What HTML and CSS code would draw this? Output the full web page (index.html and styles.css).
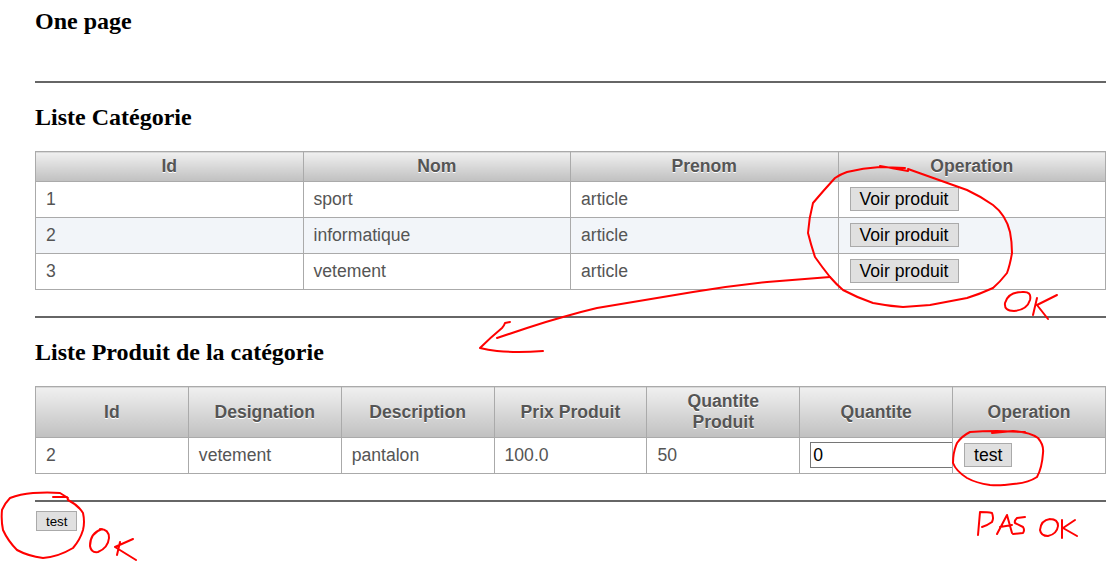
FILE: index.html
```html
<!DOCTYPE html>
<html lang="fr">
<head>
<meta charset="utf-8">
<title>One page</title>
<link rel="stylesheet" href="styles.css">
</head>
<body>
<main class="page">
  <h3 class="title">One page</h3>
  <hr class="rule rule-first">
  <h3 class="heading">Liste Catégorie</h3>
  <table class="grid">
    <thead><tr><th>Id</th><th>Nom</th><th>Prenom</th><th>Operation</th></tr></thead>
    <tbody>
      <tr><td>1</td><td>sport</td><td>article</td><td><button class="btn">Voir produit</button></td></tr>
      <tr class="alt"><td>2</td><td>informatique</td><td>article</td><td><button class="btn">Voir produit</button></td></tr>
      <tr><td>3</td><td>vetement</td><td>article</td><td><button class="btn">Voir produit</button></td></tr>
    </tbody>
  </table>
  <hr class="rule rule-mid">
  <h3 class="heading">Liste Produit de la catégorie</h3>
  <table class="grid">
    <thead><tr><th>Id</th><th>Designation</th><th>Description</th><th>Prix Produit</th><th>Quantite Produit</th><th>Quantite</th><th>Operation</th></tr></thead>
    <tbody>
      <tr><td>2</td><td>vetement</td><td>pantalon</td><td>100.0</td><td>50</td><td><input class="qty" type="text" value="0"></td><td><button class="btn">test</button></td></tr>
    </tbody>
  </table>
  <hr class="rule rule-mid">
  <button class="btn btn-small">test</button>
</main>
<svg class="ink" width="1111" height="561" viewBox="0 0 1111 561" fill="none" aria-hidden="true">
  <path d="M880 166L908 171M908 169L967 190Q980 196 993 205Q1006 215 1010 232Q1012 242 1012 253Q1010 265 1007 273Q1000 282 993 288Q980 294 967 298L930 305L903 307Q888 306 873 303Q858 298 843 290Q836 284 830 277Q822 267 815 257Q811 245 808 233Q809 218 813 203Q824 190 835 178Q841 174 847 172Q863 168 880 167L905 168"/>
  <path d="M830 277L767 282Q730 286 693 292Q645 300 597 308Q580 312 563 317Q545 322 527 328L497 338"/>
  <path d="M510 322L505 323Q504 326 502 328Q490 338 480 348Q488 350 497 351Q517 353 543 351"/>
  <path d="M1022 292Q1008 292 1005 303Q1004 311 1014 311Q1027 310 1030 300Q1032 291 1022 292"/>
  <path d="M1037 298L1033 315M1057 295L1037 305L1048 319"/>
  <path d="M992 433L1013 431Q1030 432 1038 438Q1044 445 1043 453Q1042 468 1037 477Q1028 483 1013 484Q1000 486 990 485Q976 483 967 478Q956 471 953 463Q953 452 957 443Q962 436 970 432Q982 431 997 431L1025 432"/>
  <path d="M978 535L980 512Q988 512 992 513Q994 518 992 522Q988 525 982 527"/>
  <path d="M997 534L1007 515L1012 533M1000 527L1012 525"/>
  <path d="M1025 517L1017 518Q1014 521 1015 523L1023 527Q1025 530 1023 533L1013 534"/>
  <path d="M1050 519Q1041 520 1040 530Q1041 536 1048 536Q1057 534 1058 526Q1058 519 1050 519"/>
  <path d="M1062 520L1062 538M1075 520L1063 528L1077 536"/>
  <path d="M53 497L67 497L68 500M68 500Q78 505 83 513Q85 522 83 530Q80 540 73 548Q58 557 43 558Q28 556 17 550Q8 541 3 530Q1 520 2 510Q5 503 10 498Q20 494 33 493Q48 492 60 493L68 498"/>
  <path d="M102 529Q90 533 90 546Q91 553 98 552Q108 548 109 538Q109 529 100 529"/>
  <path d="M120 542L117 555M133 539L115 547L136 560"/>
</svg>
</body>
</html>
```
FILE: styles.css
```css
html, body {
  margin: 0;
  padding: 0;
  background: #fff;
}

.page {
  width: 1071px;
  margin-left: 35px;
  font-family: "Liberation Sans", Arial, sans-serif;
  font-size: 17.6px;
}

.title,
.heading {
  font-family: "Liberation Serif", "Times New Roman", serif;
  font-size: 24px;
  font-weight: bold;
  color: #000;
  margin: 0;
}

.title {
  padding-top: 8px;
}

.heading {
  margin-top: 21px;
  margin-bottom: 20px;
}

.rule {
  display: block;
  height: 2px;
  margin: 0;
  border: 0;
  background: #666;
}

.rule-first {
  margin-top: 46px;
}

.rule-mid {
  margin-top: 26px;
}

.grid {
  width: 100%;
  table-layout: fixed;
  border-collapse: collapse;
  color: #555;
}

.grid th,
.grid td {
  border: 1px solid #aaa;
}

.grid th {
  padding: 4px 10px;
  font-weight: bold;
  text-align: center;
  background: linear-gradient(#f0f0f0, #c0c0c0);
  text-shadow: 0 1px 0 #fff;
}

.grid td {
  height: 25px;
  padding: 5px 10px;
  text-align: left;
}

.alt td {
  background: #f2f5f9;
}

.btn {
  display: block;
  height: 24px;
  margin: 0 0 1px 1px;
  padding: 0 9px;
  border: 1px solid #aaa;
  border-radius: 0;
  background: #e0e0e0;
  color: #000;
  font-family: inherit;
  font-size: 17.6px;
}

.btn-small {
  height: 20px;
  margin-top: 9px;
  font-size: 13.33px;
}

.qty {
  display: block;
  box-sizing: border-box;
  width: 143px;
  height: 26px;
  margin-top: -1px;
  padding: 0 2px;
  border: 1px solid #767676;
  background: #fff;
  color: #000;
  font-family: inherit;
  font-size: 17.6px;
}

.ink {
  position: absolute;
  top: 0;
  left: 0;
  pointer-events: none;
  stroke: #f00;
  stroke-width: 2;
  stroke-linecap: round;
  stroke-linejoin: round;
}
```
